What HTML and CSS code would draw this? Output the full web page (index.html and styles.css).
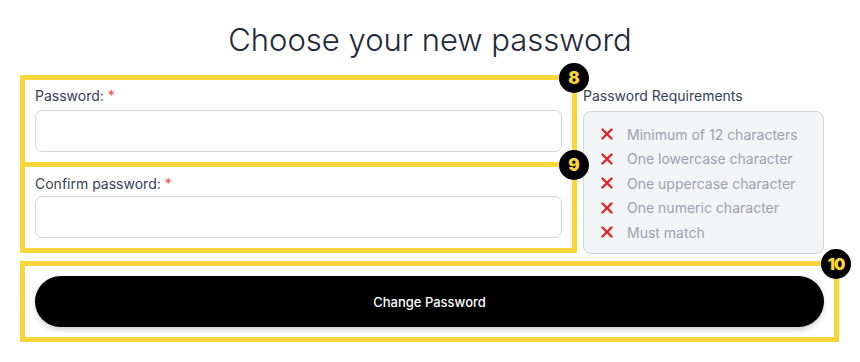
FILE: index.html
```html
<!DOCTYPE html>
<html>
<head>
<meta charset="utf-8">
<link rel="stylesheet" href="styles.css">
</head>
<body>
<div class="page">
  <h1 class="title">Choose your new password</h1>
  <div class="form">
    <div class="top-row">
      <div class="fields">
        <div class="anno anno-first">
          <label class="label">Password: <span class="req-star">*</span></label>
          <div class="input"></div>
          <span class="badge">8</span>
        </div>
        <div class="anno anno-second">
          <label class="label">Confirm password: <span class="req-star">*</span></label>
          <div class="input"></div>
          <span class="badge">9</span>
        </div>
      </div>
      <div class="requirements">
        <div class="req-title">Password Requirements</div>
        <ul class="req-list">
          <li class="req-item"><svg class="x-icon" viewBox="0 0 12 12"><path d="M1.5 1.5L10.5 10.5M10.5 1.5L1.5 10.5"/></svg>Minimum of 12 characters</li>
          <li class="req-item"><svg class="x-icon" viewBox="0 0 12 12"><path d="M1.5 1.5L10.5 10.5M10.5 1.5L1.5 10.5"/></svg>One lowercase character</li>
          <li class="req-item"><svg class="x-icon" viewBox="0 0 12 12"><path d="M1.5 1.5L10.5 10.5M10.5 1.5L1.5 10.5"/></svg>One uppercase character</li>
          <li class="req-item"><svg class="x-icon" viewBox="0 0 12 12"><path d="M1.5 1.5L10.5 10.5M10.5 1.5L1.5 10.5"/></svg>One numeric character</li>
          <li class="req-item"><svg class="x-icon" viewBox="0 0 12 12"><path d="M1.5 1.5L10.5 10.5M10.5 1.5L1.5 10.5"/></svg>Must match</li>
        </ul>
      </div>
    </div>
    <div class="anno anno-button">
      <button class="submit">Change Password</button>
      <span class="badge badge-wide">10</span>
    </div>
  </div>
</div>
</body>
</html>
```

FILE: styles.css
```css
* { box-sizing: border-box; }
html, body { margin: 0; padding: 0; background: #ffffff; }
body {
  font-family: Inter, "Noto Sans", "Liberation Sans", sans-serif;
  width: 860px;
  height: 362px;
  overflow: hidden;
}
.page { padding-top: 20px; }
.title {
  margin: 0;
  font-size: 31px;
  line-height: 40px;
  font-weight: 300;
  color: #1f2937;
  text-align: center;
}
.form {
  margin: 15px 0 0 20px;
  width: 819px;
}
.top-row {
  display: flex;
  align-items: flex-start;
}
.fields { width: 557px; }
.anno {
  position: relative;
  border: 5px solid #fbd63a;
}
.anno-first { padding: 6px 10px 10px; }
.anno-second { margin-top: -5px; padding: 7px 10px 10px; }
.label {
  display: block;
  font-size: 14px;
  line-height: 20px;
  color: #374151;
  margin-bottom: 4px;
}
.anno-second .label { margin-bottom: 2px; }
.req-star { color: #ef4444; }
.input {
  height: 42px;
  border: 1px solid #d1d5db;
  border-radius: 7px;
  background: #fff;
}
.badge {
  position: absolute;
  top: -17.5px;
  right: -17px;
  width: 30px;
  height: 30px;
  border-radius: 50%;
  background: #000;
  color: #fbd63a;
  font-size: 17px;
  font-weight: 900;
  line-height: 30px;
  text-align: center;
  z-index: 2;
}
.badge-wide { font-size: 16px; letter-spacing: -1px; }
.requirements {
  margin-left: 6px;
  width: 241px;
  padding-top: 11px;
}
.req-title {
  font-size: 14px;
  line-height: 20px;
  color: #374151;
  margin-bottom: 5px;
}
.req-list {
  list-style: none;
  margin: 0;
  padding: 10px 10px 8px 17px;
  background: #f3f4f6;
  border: 1px solid #d1d5db;
  border-radius: 8px;
}
.req-item {
  display: flex;
  align-items: center;
  height: 24.5px;
  font-size: 14px;
  color: #9ca3af;
}
.x-icon {
  width: 12px;
  height: 12px;
  margin-right: 14px;
  fill: none;
  stroke: #dc2626;
  stroke-width: 2.4;
  stroke-linecap: round;
  flex-shrink: 0;
}
.anno-button {
  margin-top: 7.5px;
  padding: 10px;
}
.submit {
  display: block;
  width: 100%;
  height: 51px;
  border: 0;
  border-radius: 26px;
  background: #000;
  color: #fff;
  font-family: Inter, "Noto Sans", "Liberation Sans", sans-serif;
  font-size: 13px;
  font-weight: 500;
  box-shadow: 0 3px 5px rgba(0, 0, 0, 0.18);
}
```
